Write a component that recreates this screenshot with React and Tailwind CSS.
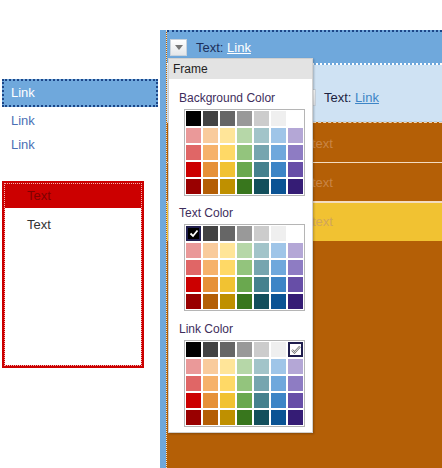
import { useState } from 'react'

const palette = [
    ['#000000', '#434343', '#666666', '#999999', '#cccccc', '#efefef', '#ffffff'],
    ['#ea9999', '#f9cb9c', '#ffe599', '#b6d7a8', '#a2c4c9', '#9fc5e8', '#b4a7d6'],
    ['#e06666', '#f6b26b', '#ffd966', '#93c47d', '#76a5af', '#6fa8dc', '#8e7cc3'],
    ['#cc0000', '#e69138', '#f1c232', '#6aa84f', '#45818e', '#3d85c6', '#674ea7'],
    ['#990000', '#b45f06', '#bf9000', '#38761d', '#134f5c', '#0b5394', '#351c75'],
]

function Swatches({ selected, light }) {
    return (
        <div className="ml-[5px] w-fit border border-[#b5b5b5] p-px bg-white">
            <div className="grid grid-cols-7 gap-[2px]">
                {palette.flat().map((c, i) => (
                    <div
                        key={i}
                        className={
                            i === selected
                                ? 'w-[15px] h-[15px] border-2 border-[#1f1d4d] flex items-center justify-center'
                                : 'w-[15px] h-[15px]'
                        }
                        style={{ backgroundColor: c }}
                    >
                        {i === selected && (
                            <svg width="10" height="9" viewBox="0 0 10 9">
                                {light ? (
                                    <path d="M1 5 L3.5 7.5 L9 1.5" fill="none" stroke="#777" strokeWidth="2.2" />
                                ) : (
                                    <path d="M1.5 4.5 L4 7 L8.5 1.5" fill="none" stroke="#fff" strokeWidth="1.8" />
                                )}
                                {light && <path d="M1 5 L3.5 7.5 L9 1.5" fill="none" stroke="#fff" strokeWidth="0.8" />}
                            </svg>
                        )}
                    </div>
                ))}
            </div>
        </div>
    )
}

function DropButton() {
    return (
        <div className="w-[17px] h-[17px] border border-[#c8d2dc] bg-gradient-to-b from-white to-[#e4e7ea] flex items-center justify-center">
            <div className="w-0 h-0 border-l-[4px] border-r-[4px] border-t-[5px] border-l-transparent border-r-transparent border-t-[#777]" />
        </div>
    )
}

function App() {
    const [textSel] = useState(0)
    const [linkSel] = useState(6)

    return (
        <div className="min-h-[468px] h-[468px] w-full bg-white flex overflow-hidden font-['Liberation_Sans',Arial,sans-serif] text-[13px]">

            {/* Left column */}
            <div className="w-[160px] shrink-0 pt-[79px] pl-[2px] pr-[2px]">
                <div className="h-[28px] bg-[#6fa8dc] border-2 border-dotted border-[#1c4587] flex items-center pl-[7px] text-white">
                    Link
                </div>
                <div className="pl-[9px] text-[#4a6fb5]">
                    <div className="h-[24px] flex items-center mt-[2px]">Link</div>
                    <div className="h-[24px] flex items-center">Link</div>
                </div>

                <div className="mt-[24px] w-[142px] h-[187px] bg-[#cc0000] p-[2px]">
                    <div className="h-full border border-dotted border-[#f4b0b0] flex flex-col">
                        <div className="h-[24px] flex items-center pl-[22px] text-[#7f0000]">Text</div>
                        <div className="flex-1 bg-white pl-[22px] pt-[7px] text-[#333]">Text</div>
                    </div>
                </div>
            </div>

            {/* Right panel */}
            <div className="flex-1 mt-[30px] bg-[#6fa8dc] pl-[6px] relative">
                <div className="h-full border-l border-dotted border-[#e8e0d0] bg-[#b45f06] flex flex-col">

                    <div className="h-[35px] bg-[#6fa8dc] border-t-2 border-b-2 border-dotted border-t-[#1c4587] border-b-white flex items-center gap-[9px] pl-[3px]">
                        <DropButton />
                        <span className="text-[#1c2f5a]">
                            Text: <span className="text-white underline">Link</span>
                        </span>
                    </div>

                    <div className="h-[57px] bg-[#cfe2f3] border-b border-dashed border-[#b9cde0] flex items-center gap-[8px] pl-[132px] pt-[9px]">
                        <DropButton />
                        <span className="text-[#1c2340]">
                            Text: <span className="text-[#3d85c6] underline">Link</span>
                        </span>
                    </div>

                    <div className="h-[40px] border-t border-dashed border-t-[#f0d8b8] flex items-center pl-[145px] pt-[2px] text-[#c98545]">
                        text
                    </div>
                    <div className="h-[1px] bg-[#f4dcc0]" />
                    <div className="h-[38px] flex items-center pl-[145px] pt-[2px] text-[#c98545]">
                        text
                    </div>
                    <div className="h-[2px] bg-[#f4dcc0]" />
                    <div className="h-[38px] bg-[#f1c232] flex items-center pl-[145px] text-[#d2a65a]">
                        text
                    </div>
                    <div className="flex-1" />
                </div>

                {/* Frame popup */}
                <div className="absolute left-[8px] top-[28px] w-[145px] h-[375px] bg-white border border-[#d0d0d0] shadow-[1px_1px_2px_rgba(0,0,0,0.25)] text-[12px]">
                    <div className="h-[20px] bg-[#e3e3e3] flex items-center pl-[4px] text-[#222]">Frame</div>
                    <div className="pl-[10px] pt-[12px]">
                        <div className="leading-[14px] text-[#3e2d5c]">Background Color</div>
                        <div className="mt-[4px]">
                            <Swatches selected={-1} />
                        </div>

                        <div className="mt-[10px] leading-[14px] text-[#3e2d5c]">Text Color</div>
                        <div className="mt-[4px]">
                            <Swatches selected={textSel} />
                        </div>

                        <div className="mt-[11px] leading-[14px] text-[#3e2d5c]">Link Color</div>
                        <div className="mt-[4px]">
                            <Swatches selected={linkSel} light />
                        </div>
                    </div>
                </div>
            </div>
        </div>
    )
}

export default App
